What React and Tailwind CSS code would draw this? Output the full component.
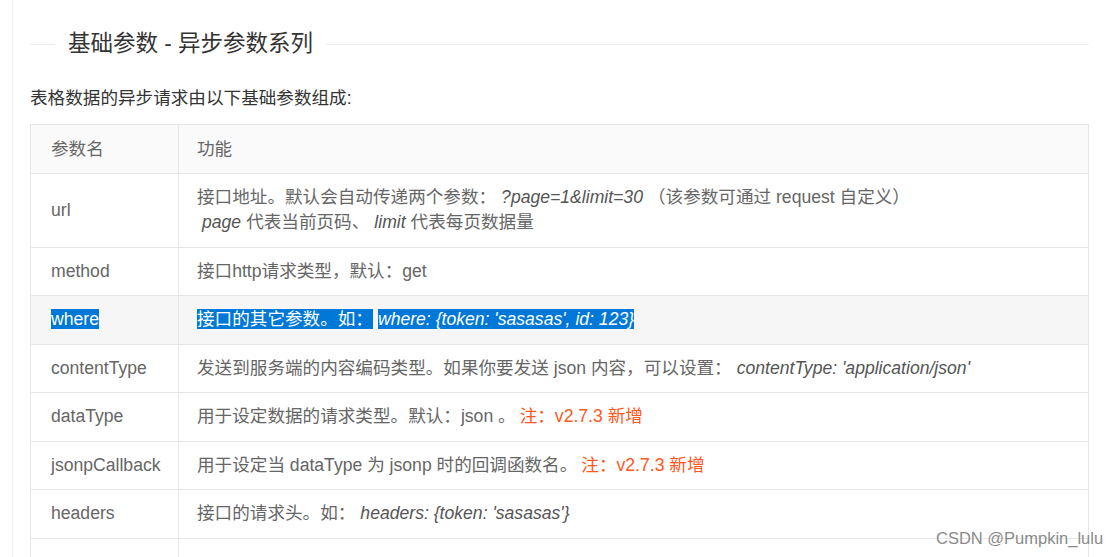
import React from "react";

const font = {
  fontFamily: '"Liberation Sans", "Noto Sans CJK SC", sans-serif',
};

// italic code-ish fragment
const Em = ({ children, sel = false }) => (
  <em
    className={
      sel
        ? "italic px-[5px] text-white"
        : "italic px-[5px] text-[#555]"
    }
  >
    {sel ? <span className="bg-[#0078d7]">{children}</span> : children}
  </em>
);

const New = () => (
  <span className="text-[#ff5722] pl-[4px]">注：v2.7.3 新增</span>
);

const rows = [
  {
    name: "url",
    desc: (
      <>
        <div>
          接口地址。默认会自动传递两个参数：
          <Em>?page=1&amp;limit=30</Em>（该参数可通过 request 自定义）
        </div>
        <div>
          <Em>page</Em>代表当前页码、
          <Em>limit</Em>代表每页数据量
        </div>
      </>
    ),
  },
  { name: "method", desc: "接口http请求类型，默认：get" },
  {
    name: "where",
    selected: true,
    desc: (
      <>
        <span className="bg-[#0078d7] text-white">接口的其它参数。如：</span>
        <Em sel>where: {"{token: 'sasasas', id: 123}"}</Em>
      </>
    ),
  },
  {
    name: "contentType",
    desc: (
      <>
        发送到服务端的内容编码类型。如果你要发送 json 内容，可以设置：
        <Em>contentType: 'application/json'</Em>
      </>
    ),
  },
  {
    name: "dataType",
    desc: (
      <>
        用于设定数据的请求类型。默认：json 。
        <New />
      </>
    ),
  },
  {
    name: "jsonpCallback",
    desc: (
      <>
        用于设定当 dataType 为 jsonp 时的回调函数名。
        <New />
      </>
    ),
  },
  {
    name: "headers",
    desc: (
      <>
        接口的请求头。如：<Em>headers: {"{token: 'sasasas'}"}</Em>
      </>
    ),
  },
];

export default function App() {
  return (
    <div
      className="relative h-[557px] w-[1120px] overflow-hidden bg-white"
      style={font}
    >
      <div className="ml-[12px] h-full border-l border-[#eeeeee] pl-[17px] pr-[31px]">
        {/* fieldset title */}
        <div className="flex items-center pt-[29px]">
          <div className="h-px w-[25px] bg-[#eeeeee]" />
          <h2 className="px-[13px] text-[22.5px] leading-[30px] text-[#333]">
            基础参数 - 异步参数系列
          </h2>
          <div className="h-px flex-1 bg-[#eeeeee]" />
        </div>

        <p className="mt-[26px] text-[17.6px] leading-[26px] text-[#333]">
          表格数据的异步请求由以下基础参数组成:
        </p>

        <table className="mt-[13px] w-full table-fixed border-collapse text-[17.6px] leading-[25px] text-[#666]">
          <colgroup>
            <col className="w-[148px]" />
            <col />
          </colgroup>
          <thead>
            <tr className="bg-[#fafafa]">
              <th className="border border-[#e6e6e6] px-[20px] py-[11.5px] text-left font-normal">
                参数名
              </th>
              <th className="border border-[#e6e6e6] px-[18px] py-[11.5px] text-left font-normal">
                功能
              </th>
            </tr>
          </thead>
          <tbody>
            {rows.map((r) => (
              <tr key={r.name} className={r.selected ? "bg-[#f6f6f6]" : ""}>
                <td className="border border-[#e6e6e6] px-[20px] py-[11.25px]">
                  {r.selected ? (
                    <span className="bg-[#0078d7] text-white">{r.name}</span>
                  ) : (
                    r.name
                  )}
                </td>
                <td className="border border-[#e6e6e6] px-[18px] py-[11.25px]">
                  {r.desc}
                </td>
              </tr>
            ))}
            <tr>
              <td className="h-[48px] border border-[#e6e6e6]" />
              <td className="h-[48px] border border-[#e6e6e6]" />
            </tr>
          </tbody>
        </table>
      </div>

      {/* watermark */}
      <div className="absolute left-[936px] top-[528px] text-[16.5px] leading-[20px] text-[#8a8a8a] [text-shadow:0_0_2px_#fff]">
        CSDN @Pumpkin_lulu
      </div>
    </div>
  );
}
